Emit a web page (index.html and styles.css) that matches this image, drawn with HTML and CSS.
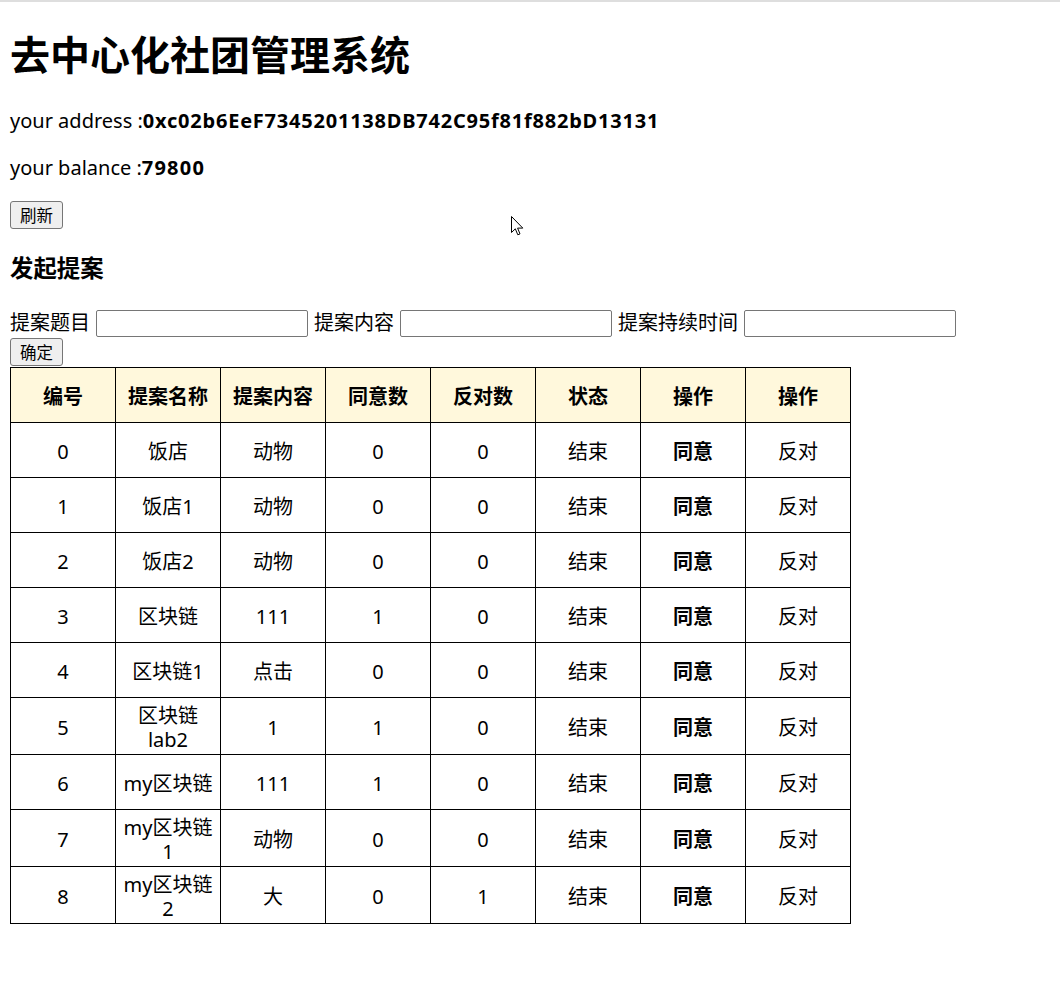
FILE: index.html
```html
<!DOCTYPE html>
<html lang="zh-CN">
<head>
<meta charset="utf-8">
<title>去中心化社团管理系统</title>
<link rel="stylesheet" href="styles.css">
</head>
<body>
<h1 class="title">去中心化社团管理系统</h1>
<p class="info">your address :<b class="addr">0xc02b6EeF7345201138DB742C95f81f882bD13131</b></p>
<p class="info">your balance :<b class="bal">79800</b></p>
<button class="btn">刷新</button>
<h3 class="section">发起提案</h3>
<div class="form-row">
  <span class="label">提案题目</span><input class="field" type="text">
  <span class="label">提案内容</span><input class="field" type="text">
  <span class="label">提案持续时间</span><input class="field" type="text">
</div>
<div><button class="btn">确定</button></div>
<table class="proposals">
  <thead>
    <tr><th>编号</th><th>提案名称</th><th>提案内容</th><th>同意数</th><th>反对数</th><th>状态</th><th>操作</th><th>操作</th></tr>
  </thead>
  <tbody>
    <tr><td>0</td><td>饭店</td><td>动物</td><td>0</td><td>0</td><td>结束</td><td class="agree">同意</td><td>反对</td></tr>
    <tr><td>1</td><td>饭店1</td><td>动物</td><td>0</td><td>0</td><td>结束</td><td class="agree">同意</td><td>反对</td></tr>
    <tr><td>2</td><td>饭店2</td><td>动物</td><td>0</td><td>0</td><td>结束</td><td class="agree">同意</td><td>反对</td></tr>
    <tr><td>3</td><td>区块链</td><td>111</td><td>1</td><td>0</td><td>结束</td><td class="agree">同意</td><td>反对</td></tr>
    <tr><td>4</td><td>区块链1</td><td>点击</td><td>0</td><td>0</td><td>结束</td><td class="agree">同意</td><td>反对</td></tr>
    <tr><td>5</td><td>区块链lab2</td><td>1</td><td>1</td><td>0</td><td>结束</td><td class="agree">同意</td><td>反对</td></tr>
    <tr><td>6</td><td>my区块链</td><td>111</td><td>1</td><td>0</td><td>结束</td><td class="agree">同意</td><td>反对</td></tr>
    <tr><td>7</td><td>my区块链1</td><td>动物</td><td>0</td><td>0</td><td>结束</td><td class="agree">同意</td><td>反对</td></tr>
    <tr><td>8</td><td>my区块链2</td><td>大</td><td>0</td><td>1</td><td>结束</td><td class="agree">同意</td><td>反对</td></tr>
  </tbody>
</table>
<svg class="cursor" width="13" height="21" viewBox="0 0 13 21" aria-hidden="true">
  <path d="M0.5 0.5 L0.5 16.5 L4.3 12.8 L6.8 18.8 L9 17.9 L6.6 12.1 L11.8 12.1 Z" fill="#fff" stroke="#000" stroke-width="1" stroke-linejoin="round"/>
</svg>
</body>
</html>
```

FILE: styles.css
```css
html {
  border-top: 2px solid #dedede;
  background: #fff;
}

body {
  margin: 0;
  padding: 0 10px 10px;
  font-family: "Noto Sans", "Noto Sans CJK SC", sans-serif;
  font-size: 20px;
  line-height: 1.32;
  color: #000;
  position: relative;
}

.title {
  font-size: 40px;
  font-weight: bold;
  line-height: 52.8px;
  margin: 26.8px 0;
}

.info {
  margin: 20px 0;
  line-height: 26.4px;
}

.info b {
  font-weight: bold;
}

.info .addr {
  letter-spacing: 0.78px;
}

.info .bal {
  letter-spacing: 1.2px;
}

.btn {
  font-family: "Noto Sans CJK SC", sans-serif;
  font-size: 16.5px;
  line-height: 22px;
  height: 28px;
  padding: 0 9px;
  background: #efefef;
  border: 1px solid #767676;
  border-radius: 3px;
  color: #000;
  box-sizing: border-box;
  display: block;
}

.section {
  font-size: 23.4px;
  font-weight: bold;
  line-height: 30.9px;
  margin: 23.4px 0;
}

.form-row {
  display: flex;
  align-items: center;
  gap: 6px;
  height: 29px;
  padding-top: 2px;
}

.label {
  white-space: nowrap;
}

.field {
  width: 212px;
  height: 27px;
  box-sizing: border-box;
  border: 1px solid #767676;
  border-radius: 2px;
  padding: 1px 3px;
  margin: 0;
  font-size: 16.5px;
  background: #fff;
}

.proposals {
  border-collapse: collapse;
  table-layout: fixed;
  width: 840px;
  margin-top: 1px;
}

.proposals th,
.proposals td {
  border: 1px solid #000;
  box-sizing: border-box;
  width: 105px;
  height: 55px;
  padding: 6px 5px 2px;
  text-align: center;
  vertical-align: middle;
  line-height: 24px;
  font-size: 20px;
}

.proposals th {
  background: #fff8dc;
  font-weight: bold;
}

.proposals td {
  font-weight: normal;
}

.proposals td.agree {
  font-weight: bold;
}

.cursor {
  position: absolute;
  left: 511px;
  top: 214px;
}
```
